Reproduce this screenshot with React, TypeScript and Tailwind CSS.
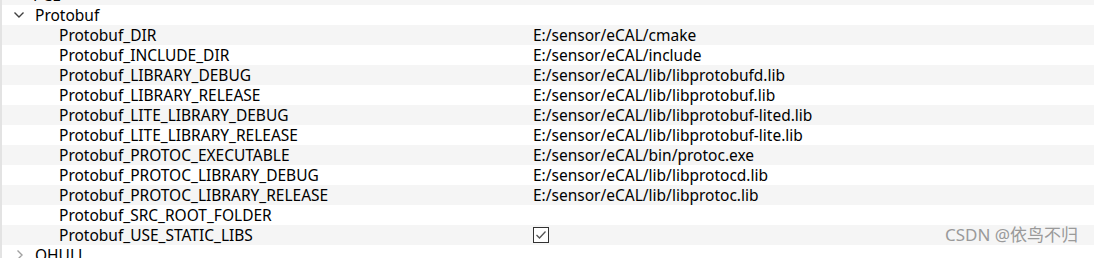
import React from 'react';

const entries: { name: string; value: string; bool?: boolean }[] = [
  { name: 'Protobuf_DIR', value: 'E:/sensor/eCAL/cmake' },
  { name: 'Protobuf_INCLUDE_DIR', value: 'E:/sensor/eCAL/include' },
  { name: 'Protobuf_LIBRARY_DEBUG', value: 'E:/sensor/eCAL/lib/libprotobufd.lib' },
  { name: 'Protobuf_LIBRARY_RELEASE', value: 'E:/sensor/eCAL/lib/libprotobuf.lib' },
  { name: 'Protobuf_LITE_LIBRARY_DEBUG', value: 'E:/sensor/eCAL/lib/libprotobuf-lited.lib' },
  { name: 'Protobuf_LITE_LIBRARY_RELEASE', value: 'E:/sensor/eCAL/lib/libprotobuf-lite.lib' },
  { name: 'Protobuf_PROTOC_EXECUTABLE', value: 'E:/sensor/eCAL/bin/protoc.exe' },
  { name: 'Protobuf_PROTOC_LIBRARY_DEBUG', value: 'E:/sensor/eCAL/lib/libprotocd.lib' },
  { name: 'Protobuf_PROTOC_LIBRARY_RELEASE', value: 'E:/sensor/eCAL/lib/libprotoc.lib' },
  { name: 'Protobuf_SRC_ROOT_FOLDER', value: '' },
  { name: 'Protobuf_USE_STATIC_LIBS', value: '', bool: true },
];

const ChevronDown = () => (
  <svg width="12" height="8" viewBox="0 0 12 8" className="ml-[11px] mr-[10px]">
    <path d="M1.5 1.5 L6 6 L10.5 1.5" fill="none" stroke="#404040" strokeWidth="1.4" />
  </svg>
);

const ChevronRight = () => (
  <svg width="8" height="12" viewBox="0 0 8 12" className="ml-[14px] mr-[11px]">
    <path d="M1.5 1.5 L6 6 L1.5 10.5" fill="none" stroke="#a0a0a0" strokeWidth="1.4" />
  </svg>
);

const Check = () => (
  <div className="w-4 h-4 border border-[#333333] bg-white flex items-center justify-center">
    <svg width="12" height="10" viewBox="0 0 12 10">
      <path d="M1.5 5 L4.5 8 L10.5 1.5" fill="none" stroke="#555555" strokeWidth="1.3" />
    </svg>
  </div>
);

export default function App() {
  return (
    <div
      className="relative w-[1094px] h-[258px] overflow-hidden bg-white text-[15.5px] text-black border-l-2 border-[#e3e3e3]"
      style={{ fontFamily: '"Noto Sans", "Noto Sans CJK SC", sans-serif' }}
    >
      <div className="-mt-[15px]">
        {/* group above, collapsed and cut off */}
        <div className="h-5 flex items-center bg-[#f5f5f5] leading-5">
          <span className="w-[31px]" />
          <span>PCL</span>
        </div>

        {/* Protobuf group */}
        <div className="h-5 flex items-center leading-5">
          <ChevronDown />
          <span>Protobuf</span>
        </div>

        {entries.map((e, i) => (
          <div
            key={e.name}
            className={`h-5 flex items-center leading-5 ${i % 2 === 0 ? 'bg-[#f5f5f5]' : 'bg-white'}`}
          >
            <span className="w-[531px] pl-[57px] whitespace-nowrap">{e.name}</span>
            <span className="whitespace-nowrap">{e.bool ? <Check /> : e.value}</span>
          </div>
        ))}

        {/* next group, collapsed */}
        <div className="h-5 flex items-center leading-5">
          <ChevronRight />
          <span>OHULL</span>
        </div>
      </div>

      <div className="absolute left-[943px] top-[225px] text-[17px] leading-5 text-[#9a9a9a] whitespace-nowrap">
        CSDN @依鸟不归
      </div>
    </div>
  );
}
